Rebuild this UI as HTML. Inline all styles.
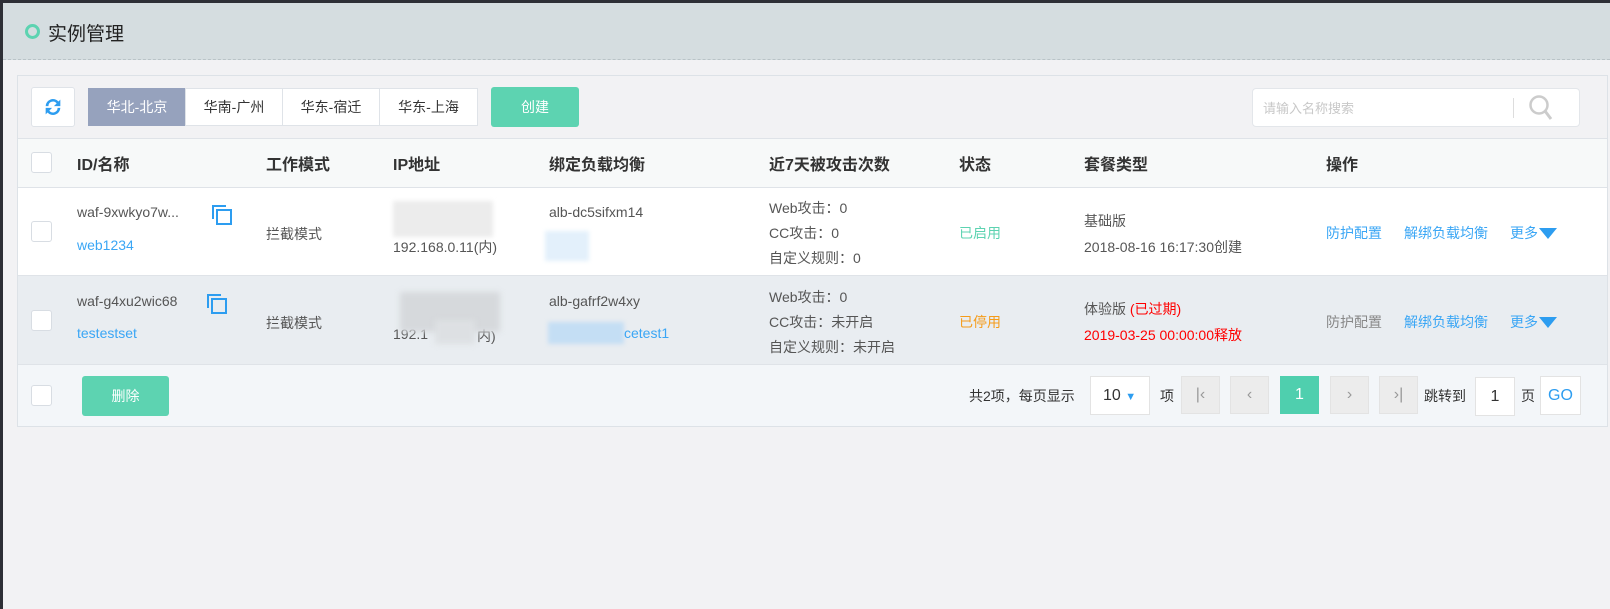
<!DOCTYPE html>
<html><head><meta charset="utf-8"><style>
*{margin:0;padding:0;box-sizing:border-box}
body{width:1610px;height:609px;background:#f2f2f4;font-family:"Liberation Sans","Noto Sans CJK SC",sans-serif;font-size:14px;color:#555;position:relative;overflow:hidden}
.a{position:absolute;white-space:nowrap}
.top{left:0;top:0;width:1610px;height:3px;background:#2d2f36}
.lft{left:0;top:0;width:3px;height:609px;background:#2d2f36}
.hdr{left:3px;top:3px;width:1607px;height:57px;background:#d5dde0;border-bottom:1px dashed #b9c3c7}
.panel{left:17px;top:75px;width:1591px;height:352px;border:1px solid #dde2e7;background:#f2f2f4}
.btn{border:1px solid #dfe3e8;background:#fff;text-align:center;color:#333}
.cb{width:21px;height:21px;border:1px solid #d8dde3;border-radius:3px;background:#fff}
.th{font-size:16px;font-weight:bold;color:#333;top:151px}
.blue{color:#3aa6f5}
.tri{display:inline-block;width:0;height:0;border-left:9px solid transparent;border-right:9px solid transparent;border-top:11px solid #2d9df0;vertical-align:-1px;margin-left:1px}
.pg{width:39px;height:38px;background:#ececec;border:1px solid #e3e3e3;color:#999;text-align:center;line-height:36px;font-size:16px}
</style></head><body>
<div class="a top"></div>
<div class="a hdr"></div>
<div class="a" style="left:25px;top:24px;width:15px;height:15px;border:3px solid #5dd3b1;border-radius:50%"></div>
<div class="a" style="left:48px;top:19px;font-size:19px;color:#222">实例管理</div>
<div class="a panel"></div>
<div class="a btn" style="left:31px;top:87px;width:44px;height:40px;border-radius:3px">
<svg width="22" height="22" viewBox="0 0 24 24" style="margin-top:8px"><path d="M4 11a8 8 0 0 1 14-5l2-2v7h-7l3-3a5 5 0 0 0-9 3z" fill="#2d9df0"/><path d="M20 13a8 8 0 0 1-14 5l-2 2v-7h7l-3 3a5 5 0 0 0 9-3z" fill="#2d9df0"/></svg></div>
<div class="a" style="left:88px;top:88px;width:98px;height:38px;background:#96a2bd;color:#fff;text-align:center;line-height:38px">华北-北京</div>
<div class="a btn" style="left:185px;top:88px;width:98px;height:38px;line-height:36px">华南-广州</div>
<div class="a btn" style="left:282px;top:88px;width:98px;height:38px;line-height:36px">华东-宿迁</div>
<div class="a btn" style="left:379px;top:88px;width:99px;height:38px;line-height:36px">华东-上海</div>
<div class="a" style="left:491px;top:87px;width:88px;height:40px;background:#5dd3b1;color:#fff;text-align:center;line-height:40px;border-radius:3px">创建</div>
<div class="a" style="left:1252px;top:88px;width:328px;height:39px;background:#fff;border:1px solid #e3e6ea;border-radius:4px"></div>
<div class="a" style="left:1263px;top:98px;color:#c8c8c8;font-size:13px">请输入名称搜索</div>
<div class="a" style="left:1513px;top:98px;width:1px;height:20px;background:#ddd"></div>
<svg class="a" style="left:1528px;top:94px" width="26" height="28" viewBox="0 0 26 28"><circle cx="11" cy="11" r="8.5" fill="none" stroke="#ccc" stroke-width="2.5"/><path d="M17 17l6 8" stroke="#ccc" stroke-width="3"/></svg>
<div class="a" style="left:18px;top:138px;width:1589px;height:50px;background:#f7f9f9;border-top:1px solid #dfe3e8;border-bottom:1px solid #dfe3e8"></div>
<div class="a cb" style="left:31px;top:152px"></div>
<div class="a th" style="left:77px">ID/名称</div>
<div class="a th" style="left:266px">工作模式</div>
<div class="a th" style="left:393px">IP地址</div>
<div class="a th" style="left:549px">绑定负载均衡</div>
<div class="a th" style="left:769px">近7天被攻击次数</div>
<div class="a th" style="left:959px">状态</div>
<div class="a th" style="left:1084px">套餐类型</div>
<div class="a th" style="left:1326px">操作</div>
<div class="a" style="left:18px;top:188px;width:1589px;height:88px;background:#fff;border-bottom:1px solid #dfe3e8"></div>
<div class="a cb" style="left:31px;top:221px"></div>
<div class="a" style="left:77px;top:204px">waf-9xwkyo7w...</div>
<svg class="a" style="left:211px;top:204px" width="22" height="22" viewBox="0 0 22 22"><path d="M2 15V2h13" fill="none" stroke="#2d9df0" stroke-width="2"/><rect x="6" y="6" width="14" height="14" fill="none" stroke="#2d9df0" stroke-width="2"/></svg>
<div class="a blue" style="left:77px;top:237px">web1234</div>
<div class="a" style="left:266px;top:224px">拦截模式</div>
<div class="a" style="left:393px;top:201px;width:100px;height:36px;background:#ececec;filter:blur(2px)"></div>
<div class="a" style="left:393px;top:237px">192.168.0.11(内)</div>
<div class="a" style="left:549px;top:204px">alb-dc5sifxm14</div>
<div class="a" style="left:545px;top:231px;width:44px;height:30px;background:#e3f0fb;filter:blur(2px)"></div>
<div class="a" style="left:769px;top:198px">Web攻击：0</div>
<div class="a" style="left:769px;top:223px">CC攻击：0</div>
<div class="a" style="left:769px;top:248px">自定义规则：0</div>
<div class="a" style="left:959px;top:223px;color:#5dd3b1">已启用</div>
<div class="a" style="left:1084px;top:211px">基础版</div>
<div class="a" style="left:1084px;top:237px">2018-08-16 16:17:30创建</div>
<div class="a blue" style="left:1326px;top:223px">防护配置</div>
<div class="a blue" style="left:1404px;top:223px">解绑负载均衡</div>
<div class="a blue" style="left:1510px;top:223px">更多<span class="tri"></span></div>
<div class="a" style="left:18px;top:276px;width:1589px;height:89px;background:#e9edf1;border-bottom:1px solid #dfe3e8"></div>
<div class="a cb" style="left:31px;top:310px"></div>
<div class="a" style="left:77px;top:293px">waf-g4xu2wic68</div>
<svg class="a" style="left:206px;top:293px" width="22" height="22" viewBox="0 0 22 22"><path d="M2 15V2h13" fill="none" stroke="#2d9df0" stroke-width="2"/><rect x="6" y="6" width="14" height="14" fill="none" stroke="#2d9df0" stroke-width="2"/></svg>
<div class="a blue" style="left:77px;top:325px">testestset</div>
<div class="a" style="left:266px;top:313px">拦截模式</div>
<div class="a" style="left:393px;top:326px">192.1</div>
<div class="a" style="left:477px;top:326px">内)</div>
<div class="a" style="left:400px;top:292px;width:100px;height:40px;background:#d6d9dc;filter:blur(3px)"></div>
<div class="a" style="left:435px;top:320px;width:40px;height:24px;background:#dde0e3;filter:blur(3px)"></div>
<div class="a" style="left:549px;top:293px">alb-gafrf2w4xy</div>
<div class="a" style="left:548px;top:322px;width:76px;height:22px;background:#c4def4;filter:blur(2px)"></div>
<div class="a blue" style="left:624px;top:325px">cetest1</div>
<div class="a" style="left:769px;top:287px">Web攻击：0</div>
<div class="a" style="left:769px;top:312px">CC攻击：未开启</div>
<div class="a" style="left:769px;top:337px">自定义规则：未开启</div>
<div class="a" style="left:959px;top:312px;color:#f59c1a">已停用</div>
<div class="a" style="left:1084px;top:299px">体验版 <span style="color:#f00">(已过期)</span></div>
<div class="a" style="left:1084px;top:325px;color:#f00">2019-03-25 00:00:00释放</div>
<div class="a" style="left:1326px;top:312px;color:#888">防护配置</div>
<div class="a blue" style="left:1404px;top:312px">解绑负载均衡</div>
<div class="a blue" style="left:1510px;top:312px">更多<span class="tri"></span></div>
<div class="a" style="left:18px;top:365px;width:1589px;height:61px;background:#f3f6f9"></div>
<div class="a cb" style="left:31px;top:385px"></div>
<div class="a" style="left:82px;top:376px;width:87px;height:40px;background:#5dd3b1;color:#fff;text-align:center;line-height:40px;border-radius:3px">删除</div>
<div class="a" style="left:969px;top:386px;color:#333">共2项，每页显示</div>
<div class="a" style="left:1090px;top:376px;width:60px;height:39px;background:#fff;border:1px solid #e3e3e3;font-size:16px;color:#333;line-height:37px;padding-left:12px">10 <span style="color:#2d9df0;font-size:11px">▼</span></div>
<div class="a" style="left:1160px;top:386px;color:#333">项</div>
<div class="a pg" style="left:1181px;top:376px">|&lsaquo;</div>
<div class="a pg" style="left:1230px;top:376px">&lsaquo;</div>
<div class="a pg" style="left:1280px;top:376px;background:#4fcfae;border-color:#4fcfae;color:#fff">1</div>
<div class="a pg" style="left:1330px;top:376px">&rsaquo;</div>
<div class="a pg" style="left:1379px;top:376px">&rsaquo;|</div>
<div class="a" style="left:1424px;top:386px;color:#333">跳转到</div>
<div class="a" style="left:1475px;top:377px;width:40px;height:39px;background:#fff;border:1px solid #e3e3e3;text-align:center;line-height:37px;font-size:16px;color:#333">1</div>
<div class="a" style="left:1521px;top:386px;color:#333">页</div>
<div class="a" style="left:1540px;top:376px;width:41px;height:39px;background:#fff;border:1px solid #e3e3e3;text-align:center;line-height:37px;font-size:16px;color:#2d9df0">GO</div>
<div class="a lft"></div>
</body></html>
